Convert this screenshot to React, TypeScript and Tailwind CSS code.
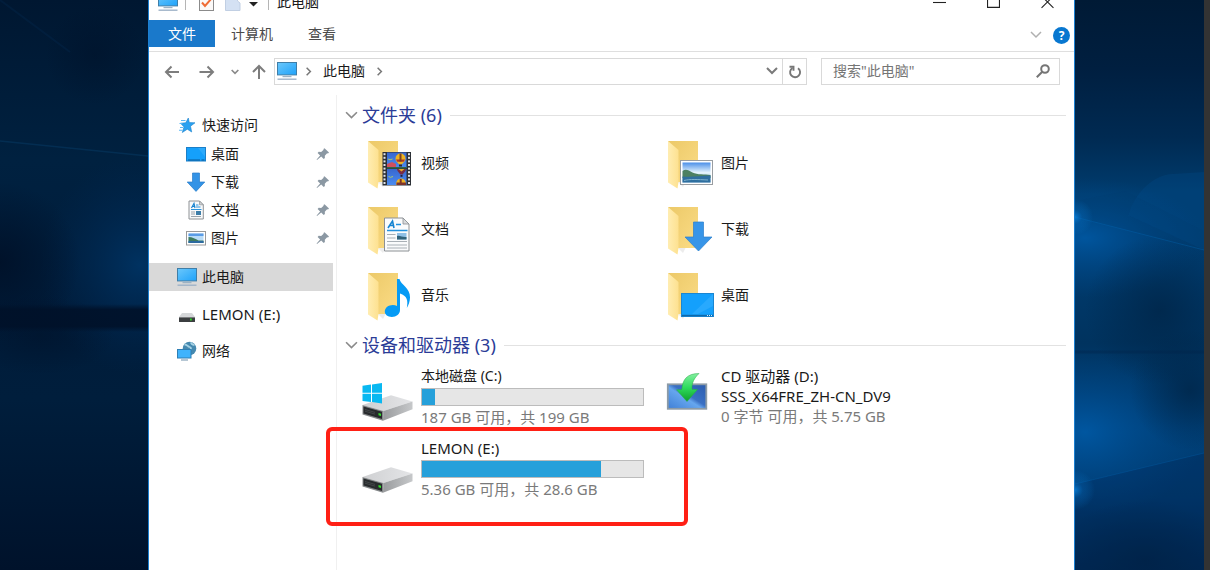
import type { ReactNode } from 'react';

function Monitor({ className = '' }: { className?: string }) {
  return (
    <svg viewBox="0 0 20 18" className={`h-[18px] w-5 shrink-0 ${className}`} aria-hidden="true">
      <defs>
        <linearGradient id="screen" x1="0" y1="0" x2="1" y2="1">
          <stop offset="0" stopColor="#6cc8fb" />
          <stop offset="1" stopColor="#1ea2fa" />
        </linearGradient>
      </defs>
      <rect x="0.5" y="0.5" width="19" height="12.4" fill="url(#screen)" stroke="#3f7ea8" />
      <path d="M5.5 14.6h9" stroke="#9db2c4" strokeWidth="1.2" />
      <path d="M0.5 17.2h19" stroke="#9fb3c8" strokeWidth="1.4" />
    </svg>
  );
}

function DesktopSmall() {
  return (
    <svg viewBox="0 0 20 20" className="size-5" aria-hidden="true">
      <rect x="0.5" y="3.5" width="19" height="13.5" fill="#15a0fb" stroke="#1b7fc8" />
      <path d="M12 4l7 0v9z" fill="#3cb1fc" opacity=".6" />
      <path d="M2 16h12M15.5 16h3" stroke="#0b5a98" strokeWidth="1" />
    </svg>
  );
}

function DownSmall() {
  return (
    <svg viewBox="0 0 20 20" className="size-5" aria-hidden="true">
      <path d="M6.5 1h7v9h5.300L10 19.400 1.200 10h5.300z" fill="#3393e6" stroke="#2a7cc9" strokeWidth=".7" />
    </svg>
  );
}

function DocSmall() {
  return (
    <svg viewBox="0 0 20 20" className="size-5" aria-hidden="true">
      <path d="M3 1h10.500l3.800 3.800V19H3z" fill="#f8f9fa" stroke="#8e9295" />
      <path d="M13.500 1v3.800h3.800z" fill="#cfd2d4" stroke="#8e9295" strokeWidth=".7" />
      <path d="M5.500 8L8 3.500 9 8M6.500 6.500h2.300" fill="none" stroke="#1783cf" strokeWidth="1.200" />
      <path d="M10 5h2.500M10 7h4.500M5 9.500h10.500" stroke="#2a93dc" strokeWidth="1" />
      <path d="M5 12h4M5 14h4M5 16.500h10" stroke="#9aa3ab" strokeWidth="1" />
      <rect x="10" y="11" width="5" height="4" fill="#3c7da8" />
    </svg>
  );
}

function PictureSmall() {
  return (
    <svg viewBox="0 0 20 20" className="size-5" aria-hidden="true">
      <rect x="0.500" y="3.500" width="19" height="13.500" fill="#fff" stroke="#9a9a9a" />
      <rect x="2.500" y="5.500" width="15" height="9.500" fill="#b9dcf7" />
      <path d="M2.500 5.500h15v2.500h-15z" fill="#5b9ce6" />
      <path d="M2.500 9c4 0 7 2 10 3.500h5V15h-15z" fill="#3f7b5e" />
      <path d="M2.500 13h15v2h-15z" fill="#2c6aa0" />
    </svg>
  );
}

function DriveSmall() {
  return (
    <svg viewBox="0 0 20 20" className="size-5" aria-hidden="true">
      <path d="M5 9h10l3 4H2z" fill="#d5d7d9" />
      <rect x="2" y="13" width="16" height="5" rx=".6" fill="#3b3e40" />
      <path d="M2 13h16v.800H2z" fill="#8d8f91" />
      <rect x="13" y="14.500" width="1.800" height="2" fill="#31d02a" />
    </svg>
  );
}

function NetworkSmall() {
  return (
    <svg viewBox="0 0 20 20" className="size-5" aria-hidden="true">
      <circle cx="12.500" cy="7.500" r="6.800" fill="#4689af" />
      <path d="M7.500 3.500c3 0 3 2 5 2.500s2 2 0 3M14.500 1.200c-1 1.500 1 2.500 3 3" fill="none" stroke="#a5d2e4" strokeWidth="1.800" />
      <rect x="0.500" y="8.500" width="13.500" height="8.500" fill="#3fb3fc" stroke="#2f7fb4" />
      <path d="M4 19h7" stroke="#8fa9bd" strokeWidth="1.300" />
    </svg>
  );
}

function Star() {
  return (
    <svg viewBox="0 0 18 18" className="size-[18px]" aria-hidden="true">
      <path
        d="M10.300 2l1 4.600 5.700.2-4.500 3.400 1.200 5.800-4.400-2.800-5 3.300 1.700-5.600L2.500 7.200l5.200-.4z"
        fill="#2aa1f0"
        stroke="#1b82cd"
        strokeWidth=".6"
      />
      <path d="M3 4.500h4.500M1.500 7.500h3M2 11.500h3M1 14.200h3.500" stroke="#5bb8f5" strokeWidth="1.100" />
    </svg>
  );
}

function Pin() {
  return (
    <svg viewBox="0 0 14 14" className="size-[14px]" aria-hidden="true">
      <path
        d="M8.500 1.200L13 5.600l-1 .9-.9-.2-2.300 2.400.1 2.400-1.200 1-2.500-2.600L1 12.900l-.4-.4 3.500-4.100L1.600 6l1.100-1.200 2.500.100 2.400-2.200-.1-.8z"
        fill="#8b98a3"
      />
    </svg>
  );
}

function Folder({ children }: { children: ReactNode }) {
  return (
    <svg viewBox="0 0 60 66" className="h-[66px] w-[60px] shrink-0" aria-hidden="true">
      <defs>
        <linearGradient id="folderBack" x1="0" y1="0" x2="1" y2="1">
          <stop offset="0" stopColor="#ecc968" />
          <stop offset="1" stopColor="#fbdc86" />
        </linearGradient>
        <linearGradient id="folderFlap" x1="0" y1="0" x2="1" y2="0">
          <stop offset="0" stopColor="#ffedb2" />
          <stop offset="1" stopColor="#fde190" />
        </linearGradient>
        <linearGradient id="sky" x1="0" y1="0" x2="0" y2="1">
          <stop offset="0" stopColor="#4b8fe8" />
          <stop offset=".5" stopColor="#e4f3fc" />
          <stop offset="1" stopColor="#9cc7e6" />
        </linearGradient>
        <linearGradient id="film" x1="0" y1="0" x2="0" y2="1">
          <stop offset="0" stopColor="#3767cf" />
          <stop offset="1" stopColor="#4b8cf0" />
        </linearGradient>
      </defs>
      <path d="M17 52l5 5 3-6z" fill="#ececec" />
      <path d="M7 11h30v41H14z" fill="url(#folderBack)" />
      <path d="M7 11l10.500 9v32l-1 6.500L7 52.500z" fill="url(#folderFlap)" />
      {children}
    </svg>
  );
}

function VideoFolder() {
  const holes = Array.from({ length: 9 }, (_, i) => 23.2 + i * 3.6);
  return (
    <Folder>
      <rect x="21.500" y="22" width="28.500" height="33.500" fill="#2c3036" />
      <rect x="26" y="22.500" width="19.500" height="15.500" fill="url(#film)" />
      <rect x="26" y="39" width="19.500" height="16" fill="url(#film)" />
      <path d="M26 34l5-2 4 2v4h-9z" fill="#d0505d" />
      <path d="M26 37h19.500v1.500H26z" fill="#316447" />
      <path d="M34.500 28.500a5 5 0 0 1 10 0c0 3-2.500 4-3.500 6h-3c-1-2-3.500-3-3.500-6z" fill="#edb321" />
      <path d="M35 29.500h9l-1.300 2.300h-6.400z" fill="#b23529" />
      <path d="M38.500 23.500h2v8h-2z" fill="#7b4426" />
      <path d="M38 34.500h3v2h-3z" fill="#2d2433" />
      <path d="M36 39h9c0 2-2 3.500-3.300 5.500h-2.400C38 42.500 36 41 36 39z" fill="#7a2c42" />
      <path d="M37.500 39h6l-3 2.500z" fill="#e5a929" />
      <path d="M39.500 45h2v1.800h-2z" fill="#211f38" />
      <path d="M35 54.500c0-8 10-8 10 0z" fill="#edb321" />
      <path d="M35.500 52.500h9.500v2.500h-9.500z" fill="#7e342a" />
      <path d="M38.700 49h2v5h-2z" fill="#7e342a" />
      <path d="M27 29l2 .8 2.500-.8M27.500 46.500l2 .800 2.500-.800" stroke="#a8c96c" strokeWidth="1" fill="none" />
      {holes.map((y) => (
        <g key={y} fill="#e3e6e9">
          <rect x="22.500" y={y} width="2" height="2" />
          <rect x="47" y={y} width="2" height="2" />
        </g>
      ))}
    </Folder>
  );
}

function DocFolder() {
  return (
    <Folder>
      <path d="M23.500 22H42l6 6v27H23.500z" fill="#fafbfc" stroke="#8c9094" />
      <path d="M42 22v6h6z" fill="#d8dadc" stroke="#8c9094" strokeWidth=".8" />
      <path d="M27 32l4.500-7 1.500 7M28.800 29.500h4" fill="none" stroke="#1583d0" strokeWidth="1.600" />
      <path d="M35 28.500h5M26 34.500h20.500" stroke="#2492dd" strokeWidth="1.300" />
      <path d="M26 38.500h8.500M26 42h8.500M26 45.500h20M26 49h20M26 52h20" stroke="#a9b0b6" strokeWidth="1" />
      <rect x="36" y="37" width="9.500" height="6.500" fill="#8fc0e6" />
      <path d="M36 40c3-1 5 1.500 9.500 1v2.500H36z" fill="#31627a" />
    </Folder>
  );
}

function MusicFolder() {
  return (
    <Folder>
      <path
        d="M36 17h2.500c1 5.500 11 9 10.500 18.500-.1 4-1.200 7-3.200 10.500 1.500-8 .2-12-6.800-14.500V48c0 4-3.600 7-8.200 7-4 0-7-2.200-7-5.400 0-3.800 3.700-6.600 8-6.600 1.600 0 3 .3 4.200 1z"
        fill="#069bf5"
      />
    </Folder>
  );
}

function PictureFolder() {
  return (
    <Folder>
      <rect x="19.500" y="30.500" width="32" height="24" fill="#fff" stroke="#999da1" />
      <rect x="21.500" y="32.500" width="28" height="20" fill="url(#sky)" />
      <path d="M21.500 41c3-2.500 6-1 10 1.500 5 2.500 12 1.500 18 2.500v3h-28z" fill="#4c8062" />
      <path d="M21.500 46.500c9 1 19-1 28-1v7h-28z" fill="#2f6f9f" />
      <path d="M23 50.500c6-1.500 13-1 24-.5" stroke="#7fb3cf" strokeWidth="1" fill="none" />
    </Folder>
  );
}

function DownloadFolder() {
  return (
    <Folder>
      <path d="M32.500 26h10v15H51L37.500 55 24 41h8.500z" fill="#3795e8" stroke="#2b7ecb" strokeWidth=".7" />
    </Folder>
  );
}

function DesktopFolder() {
  return (
    <Folder>
      <rect x="20.500" y="31.500" width="32" height="23" fill="#14a0fc" stroke="#1a86d2" />
      <path d="M52 32v12L37 52h-6z" fill="#38b0ff" opacity=".55" />
      <path d="M21 53.500h31" stroke="#0f68aa" strokeWidth="1.400" />
      <path d="M46 53.500h5" stroke="#d3ecfc" strokeWidth="1" strokeDasharray="1 1" />
    </Folder>
  );
}

function Drive({ windows = false }: { windows?: boolean }) {
  return (
    <svg viewBox="0 0 60 66" className="h-[66px] w-[60px] shrink-0" aria-hidden="true">
      <defs>
        <linearGradient id="driveTop" x1="0" y1="0" x2="1" y2="0">
          <stop offset="0" stopColor="#cfd0d2" />
          <stop offset="1" stopColor="#e4e5e7" />
        </linearGradient>
        <linearGradient id="driveSide" x1="0" y1="0" x2="1" y2="0">
          <stop offset="0" stopColor="#999b9d" />
          <stop offset="1" stopColor="#c6c8ca" />
        </linearGradient>
      </defs>
      <path d="M1.500 39L30 29.200 51.500 35.500 22.500 45z" fill="url(#driveTop)" />
      <path d="M22.500 45L51.500 35.500v7.800L22 54.700z" fill="url(#driveSide)" />
      <path d="M1.500 39l21 6-.5 9.700L1.500 48.500z" fill="#85888a" />
      <path d="M2.500 40.500L21 45.800v7.200L2.500 47.600z" fill="#282b2d" />
      <path d="M4 43.500l10 2.900M4 45.200l10 2.900" stroke="#4d5153" strokeWidth=".7" />
      <path d="M17.500 47l2.500.700v2.300l-2.500-.700z" fill="#32e02c" />
      {windows && (
        <path
          d="M1.500 19.700l8.500-1.200v8.300H1.500zM11 18.400l10-1.400v9.800H11zM1.500 27.800H10v8.300l-8.500-1.200zM11 27.800h10v9.700l-10-1.400z"
          fill="#09b8f1"
        />
      )}
    </svg>
  );
}

function CdDrive() {
  return (
    <svg viewBox="0 0 60 66" className="h-[66px] w-[60px] shrink-0" aria-hidden="true">
      <defs>
        <linearGradient id="cdScreen" x1="0" y1="1" x2="1" y2="0">
          <stop offset="0" stopColor="#3f7fd6" />
          <stop offset=".45" stopColor="#66a6ee" />
          <stop offset=".55" stopColor="#3a70c4" />
          <stop offset="1" stopColor="#2b5cae" />
        </linearGradient>
        <linearGradient id="arrow" x1="0" y1="0" x2="0" y2="1">
          <stop offset="0" stopColor="#83efa0" />
          <stop offset=".5" stopColor="#2edc5c" />
          <stop offset="1" stopColor="#0f9e2b" />
        </linearGradient>
      </defs>
      <rect x="6.800" y="18.300" width="38.500" height="24.500" fill="url(#cdScreen)" stroke="#8d9ba6" strokeWidth="1.800" />
      <path
        d="M38 7.500c-12 0-16.500 6-17.200 16l-5.300.3L26 35.500l10.500-12-5.500-.2c-.3-6.500 2-11 7-15.800z"
        fill="url(#arrow)"
        stroke="#25a946"
        strokeWidth=".5"
      />
    </svg>
  );
}

function Chevron({ className, d = 'M1 3l5 5 5-5' }: { className: string; d?: string }) {
  return (
    <svg viewBox="0 0 12 12" className={className} fill="none" stroke="currentColor" aria-hidden="true">
      <path d={d} />
    </svg>
  );
}

function Arrow({ d }: { d: string }) {
  return (
    <svg viewBox="0 0 16 16" className="size-4" fill="none" stroke="#7d7d7d" strokeWidth="2" aria-hidden="true">
      <path d={d} />
    </svg>
  );
}

function LeftWallpaper() {
  return (
    <svg viewBox="0 0 148 570" preserveAspectRatio="none" className="w-[148px] shrink-0 self-stretch" aria-hidden="true">
      <defs>
        <linearGradient id="leftBase" x1="0" y1="0" x2="0" y2="1">
          <stop offset="0" stopColor="#001731" />
          <stop offset=".28" stopColor="#002140" />
          <stop offset=".54" stopColor="#001c3a" />
          <stop offset=".7" stopColor="#001e3c" />
          <stop offset="1" stopColor="#00122b" />
        </linearGradient>
        <radialGradient id="leftGlow">
          <stop offset="0" stopColor="#003261" />
          <stop offset="1" stopColor="#002750" stopOpacity="0" />
        </radialGradient>
        <radialGradient id="leftDark">
          <stop offset="0" stopColor="#000e24" stopOpacity=".75" />
          <stop offset="1" stopColor="#000e24" stopOpacity="0" />
        </radialGradient>
        <linearGradient id="leftBand" x1="0" y1="0" x2="0" y2="1">
          <stop offset="0" stopColor="#001129" stopOpacity="0" />
          <stop offset=".2" stopColor="#001129" stopOpacity=".9" />
          <stop offset=".8" stopColor="#001129" stopOpacity=".9" />
          <stop offset="1" stopColor="#001129" stopOpacity="0" />
        </linearGradient>
      </defs>
      <rect width="148" height="570" fill="url(#leftBase)" />
      <ellipse cx="140" cy="265" rx="100" ry="110" fill="url(#leftGlow)" />
      <ellipse cx="0" cy="262" rx="80" ry="80" fill="url(#leftDark)" />
      <ellipse cx="95" cy="55" rx="50" ry="50" fill="url(#leftDark)" opacity=".5" />
      <ellipse cx="40" cy="335" rx="75" ry="40" fill="url(#leftDark)" opacity=".6" />
      <rect y="304" width="148" height="28" fill="url(#leftBand)" />
      <path d="M0 141l148 15" stroke="#073b65" strokeWidth="1.500" opacity=".5" />
      <path d="M0 0l70 52" stroke="#06305a" strokeWidth="2" opacity=".25" />
    </svg>
  );
}

function RightWallpaper() {
  return (
    <svg viewBox="0 0 129 570" preserveAspectRatio="none" className="w-[129px] shrink-0 self-stretch" aria-hidden="true">
      <defs>
        <linearGradient id="rightBase" x1="0" y1="0" x2="0" y2="1">
          <stop offset="0" stopColor="#001a35" />
          <stop offset=".12" stopColor="#001f40" />
          <stop offset=".24" stopColor="#002a52" />
          <stop offset=".34" stopColor="#003c6e" />
          <stop offset=".48" stopColor="#003a6c" />
          <stop offset=".6" stopColor="#00335f" />
          <stop offset=".75" stopColor="#004078" />
          <stop offset=".87" stopColor="#003a6e" />
          <stop offset="1" stopColor="#002b56" />
        </linearGradient>
        <radialGradient id="rightGlow">
          <stop offset="0" stopColor="#005caa" stopOpacity=".8" />
          <stop offset=".5" stopColor="#00529a" stopOpacity=".4" />
          <stop offset="1" stopColor="#004b8e" stopOpacity="0" />
        </radialGradient>
        <radialGradient id="rightDark">
          <stop offset="0" stopColor="#002344" stopOpacity=".7" />
          <stop offset="1" stopColor="#002344" stopOpacity="0" />
        </radialGradient>
        <radialGradient id="spark">
          <stop offset="0" stopColor="#0b84df" stopOpacity=".8" />
          <stop offset=".4" stopColor="#0670c4" stopOpacity=".3" />
          <stop offset="1" stopColor="#0b84df" stopOpacity="0" />
        </radialGradient>
      </defs>
      <rect width="129" height="570" fill="url(#rightBase)" />
      <ellipse cx="10" cy="238" rx="120" ry="60" fill="url(#rightGlow)" />
      <ellipse cx="10" cy="432" rx="120" ry="85" fill="url(#rightGlow)" />
      <ellipse cx="85" cy="310" rx="75" ry="75" fill="url(#rightDark)" />
      <ellipse cx="115" cy="390" rx="60" ry="60" fill="url(#rightDark)" />
      <ellipse cx="70" cy="560" rx="90" ry="60" fill="url(#rightDark)" />
      <path d="M53 222c0-20 22-48 45-48l31-2v78L53 215z" fill="#005296" opacity=".22" />
      <path d="M0 201l50-10 79 40v19L0 217z" fill="#003d6e" opacity=".2" />
      <path d="M0 217l129 33" stroke="#0069b5" opacity=".35" />
      <path d="M0 484l129-31v117H0z" fill="#001d47" opacity=".22" />
      <path d="M0 484l129-31" stroke="#0060a9" opacity=".35" />
      <path d="M0 352h129" stroke="#002349" strokeWidth="3" opacity=".35" />
      <circle cx="0" cy="217" r="18" fill="url(#spark)" />
      <circle cx="0" cy="490" r="20" fill="url(#spark)" />
    </svg>
  );
}

function SideItem({
  icon,
  label,
  pinned = false,
  nested = false,
  selected = false,
}: {
  icon: ReactNode;
  label: ReactNode;
  pinned?: boolean;
  nested?: boolean;
  selected?: boolean;
}) {
  return (
    <a
      href="#"
      aria-current={selected ? 'page' : undefined}
      className={`flex h-7 items-center gap-[5px] pr-[3px] ${nested ? 'pl-[37px]' : 'pl-7'} ${selected ? 'bg-[#d9d9d9]' : ''}`}
    >
      <span className="flex w-5 shrink-0 justify-center">{icon}</span>
      <span className="flex-1 whitespace-nowrap">{label}</span>
      {pinned && <Pin />}
    </a>
  );
}

function GroupHeading({ children }: { children: ReactNode }) {
  return (
    <h2 className="flex h-[30px] items-center pr-2 pl-2 text-lg leading-6 whitespace-nowrap text-[#2b3c97]">
      <Chevron className="mr-1 size-[13px] shrink-0 stroke-[1.5] text-[#8a8a8a]" />
      {children}
      <span className="ml-2 h-px flex-1 bg-[#e2e2e2]" />
    </h2>
  );
}

function FolderTile({ icon, label }: { icon: ReactNode; label: string }) {
  return (
    <a href="#" className="flex h-[66px] items-center">
      {icon}
      <span>{label}</span>
    </a>
  );
}

function Capacity({ value, label }: { value: number; label: string }) {
  return (
    <div
      role="progressbar"
      aria-label={label}
      aria-valuenow={value}
      aria-valuemin={0}
      aria-valuemax={100}
      className="mt-[2px] mb-px h-[18px] w-[223px] border border-[#bcbcbc] bg-[#e6e6e6]"
    >
      <div className="h-full bg-[#26a0da]" style={{ width: `${value}%` }} />
    </div>
  );
}

export default function App() {
  return (
    <div
      lang="zh-CN"
      className="flex min-h-screen overflow-hidden bg-[#001a35] font-['Noto_Sans','Noto_Sans_CJK_SC',sans-serif] text-sm leading-5 text-[#1a1a1a]"
    >
      <LeftWallpaper />
      <section aria-label="此电脑" className="flex min-w-0 flex-1 flex-col overflow-hidden border-x border-[#1b7fd0] bg-white">
        <header className="-mt-4 flex h-9 shrink-0 items-center pl-[9px]">
          <Monitor />
          <span className="ml-[7px] h-4 w-px bg-[#b5b5b5]" />
          <button aria-label="属性" className="ml-[13px]">
            <svg viewBox="0 0 15 18" className="h-[18px] w-[15px]" aria-hidden="true">
              <rect x="0.500" y="0.500" width="14" height="17" fill="#fbf9f8" stroke="#8b8b8b" />
              <path d="M3 9.500l3 3.500 6.500-7.500" fill="none" stroke="#ef6c35" strokeWidth="2" />
            </svg>
          </button>
          <button aria-label="新建文件夹" className="ml-[11px]">
            <svg viewBox="0 0 16 18" className="h-[18px] w-4" aria-hidden="true">
              <path d="M0.500 0h12v8l2.500 2v7.500H.5z" fill="#d4e1f3" stroke="#c1cfe3" />
            </svg>
          </button>
          <button aria-label="自定义快速访问工具栏" className="ml-2">
            <svg viewBox="0 0 9 10" className="h-[10px] w-[9px]" aria-hidden="true">
              <path d="M0.500 1.500h8" stroke="#222" strokeWidth="1.500" />
              <path d="M0 5h9L4.500 9.500z" fill="#222" />
            </svg>
          </button>
          <span className="ml-[10px] h-4 w-px bg-[#b5b5b5]" />
          <h1 className="ml-2">此电脑</h1>
          <div className="ml-auto flex items-center gap-[41px] pr-5 text-[#222]">
            <button aria-label="最小化">
              <Chevron className="size-[13px]" d="M0 6h12" />
            </button>
            <button aria-label="最大化">
              <Chevron className="size-[13px]" d="M.5.5h11v10h-11z" />
            </button>
            <button aria-label="关闭">
              <Chevron className="size-[13px]" d="M.5 0l11 11M11.500 0l-11 11" />
            </button>
          </div>
        </header>

        <nav aria-label="功能区" className="flex h-8 shrink-0 items-start border-b border-[#dfdfdf] leading-[27px] text-[#4a4a4a]">
          <button className="h-[27px] w-[66px] bg-[#1a79cb] text-white">文件</button>
          <button className="ml-4">计算机</button>
          <button className="ml-[35px]">查看</button>
          <div className="mr-1 ml-auto flex h-[30px] items-center gap-[11px]">
            <button aria-label="展开功能区">
              <Chevron className="size-3 stroke-[1.5] text-[#b0b0b0]" />
            </button>
            <button
              aria-label="帮助"
              className="size-[17px] rounded-full bg-[#0877d0] text-center text-xs leading-[17px] font-bold text-white"
            >
              ?
            </button>
          </div>
        </nav>

        <div className="mt-[6px] flex h-[27px] shrink-0 items-center pr-[14px] pl-[15px]">
          <button aria-label="后退">
            <Arrow d="M15 8H2M7.500 2.500L2 8l5.500 5.500" />
          </button>
          <button aria-label="前进" className="ml-[19px]">
            <Arrow d="M.5 8H14M8.500 2.500L14 8l-5.500 5.500" />
          </button>
          <button aria-label="最近位置" className="ml-4 text-[#8a8a8a]">
            <Chevron className="size-2 stroke-[2.5]" />
          </button>
          <button aria-label="上移" className="ml-3">
            <Arrow d="M8 15V2M2 8l6-6 6 6" />
          </button>
          <div className="ml-[7px] flex h-[27px] flex-1 items-center border border-[#d9d9d9] pb-px">
            <Monitor className="ml-[2px]" />
            <Chevron className="ml-[7px] size-[9px] stroke-2 text-[#777]" d="M3.500 1l5 5-5 5" />
            <a href="#" className="ml-[10px]">
              此电脑
            </a>
            <Chevron className="ml-[10px] size-[9px] stroke-2 text-[#777]" d="M3.500 1l5 5-5 5" />
            <button aria-label="以前的位置" className="mr-1 ml-auto text-[#7a7a7a]">
              <Chevron className="size-3 stroke-2" />
            </button>
            <button aria-label="刷新" className="flex h-[25px] w-6 items-center justify-center self-start border-l border-[#d9d9d9]">
              <svg viewBox="0 0 14 14" className="size-[14px]" fill="none" stroke="#777" strokeWidth="1.900" aria-hidden="true">
                <path d="M10 3.200A5 5 0 1 1 4.500 3" />
                <path d="M1.500 1.700h4v4" />
              </svg>
            </button>
          </div>
          <div className="ml-[14px] flex h-[27px] w-[239px] items-center border border-[#d9d9d9] pr-[9px] pb-px pl-[11px]">
            <input
              type="search"
              aria-label='搜索"此电脑"'
              placeholder='搜索"此电脑"'
              className="min-w-0 flex-1 outline-none placeholder:text-[#757575]"
            />
            <svg viewBox="0 0 14 14" className="size-[14px]" fill="none" stroke="#757575" strokeWidth="2" aria-hidden="true">
              <circle cx="9" cy="5" r="3.800" />
              <path d="M6.300 7.700L.8 13.200" />
            </svg>
          </div>
        </div>

        <div className="mt-[10px] flex flex-1">
          <nav aria-label="导航窗格" className="w-[188px] shrink-0 border-r border-[#f0f0f0] pt-4 pr-[3px]">
            <SideItem icon={<Star />} label="快速访问" />
            <div className="mt-px">
              <SideItem nested pinned icon={<DesktopSmall />} label="桌面" />
              <SideItem nested pinned icon={<DownSmall />} label="下载" />
              <SideItem nested pinned icon={<DocSmall />} label="文档" />
              <SideItem nested pinned icon={<PictureSmall />} label="图片" />
            </div>
            <div className="mt-[11px] flex flex-col gap-[9px]">
              <SideItem selected icon={<Monitor />} label="此电脑" />
              <SideItem icon={<DriveSmall />} label={<span className="text-[15px]">LEMON (E:)</span>} />
              <SideItem icon={<NetworkSmall />} label="网络" />
            </div>
          </nav>

          <main className="min-w-0 flex-1 pt-[5px]">
            <GroupHeading>文件夹 (6)</GroupHeading>
            <div className="mb-[2px] grid grid-cols-[300px_300px] pl-6">
              <FolderTile icon={<VideoFolder />} label="视频" />
              <FolderTile icon={<PictureFolder />} label="图片" />
              <FolderTile icon={<DocFolder />} label="文档" />
              <FolderTile icon={<DownloadFolder />} label="下载" />
              <FolderTile icon={<MusicFolder />} label="音乐" />
              <FolderTile icon={<DesktopFolder />} label="桌面" />
            </div>
            <GroupHeading>设备和驱动器 (3)</GroupHeading>
            <div className="grid auto-rows-[72px] grid-cols-[300px_300px] pt-[6px] pl-6 text-[15px] leading-5 whitespace-nowrap">
              <a href="#" className="flex">
                <Drive windows />
                <div>
                  <p className="text-sm leading-5">本地磁盘 (C:)</p>
                  <Capacity value={6} label="本地磁盘 (C:)" />
                  <p className="text-[#7a7a7a]">187 GB 可用，共 199 GB</p>
                </div>
              </a>
              <a href="#" className="flex">
                <CdDrive />
                <div>
                  <p>CD 驱动器 (D:)</p>
                  <p>SSS_X64FRE_ZH-CN_DV9</p>
                  <p className="text-[#7a7a7a]">0 字节 可用，共 5.75 GB</p>
                </div>
              </a>
              <a href="#" className="relative flex">
                <Drive />
                <div>
                  <p>LEMON (E:)</p>
                  <Capacity value={81} label="LEMON (E:)" />
                  <p className="text-[#7a7a7a]">5.36 GB 可用，共 28.6 GB</p>
                </div>
                <span className="pointer-events-none absolute -top-[11px] -left-[35px] h-[99px] w-[362px] rounded-md border-4 border-[#ff2015]" />
              </a>
            </div>
          </main>
        </div>
      </section>
      <RightWallpaper />
      <div className="w-[6px] shrink-0 bg-[#333]" />
    </div>
  );
}
